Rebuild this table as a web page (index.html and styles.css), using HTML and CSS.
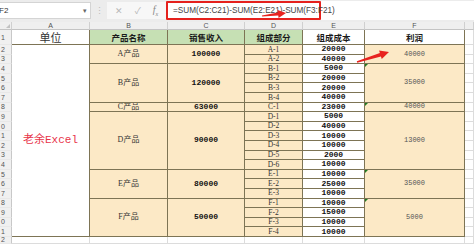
FILE: index.html
```html
<!DOCTYPE html>
<html lang="zh">
<head>
<meta charset="utf-8">
<title>Sheet</title>
<link rel="stylesheet" href="styles.css">
</head>
<body>
<div class="toolbar">
  <div class="namebox"><span class="cellref">F2</span><span class="caret">▾</span></div>
  <span class="grip">⋮</span>
  <div class="fxbtns"><span class="ic">✕</span><span class="ic">✓</span><span class="ic fx">f<sub>x</sub></span></div>
  <div class="formula"><span class="formula-text">=SUM(C2:C21)-SUM(E2:E21)-SUM(F3:F21)</span></div>
</div>
<div class="sheet">
  <div class="c ch corner"></div><div class="c ch">A</div><div class="c ch">B</div><div class="c ch">C</div><div class="c ch">D</div><div class="c ch">E</div><div class="c ch">F</div><div class="c ch"></div>

  <div class="c rh">1</div><div class="c t unit">单位</div><div class="c t hdr green">产品名称</div><div class="c t hdr green">销售收入</div><div class="c t hdr green">组成部分</div><div class="c t hdr">组成成本</div><div class="c t hdr">利润</div><div class="c g"></div>

  <div class="c rh">2</div><div class="c t s20 brand">老余Excel</div><div class="c t s2 prod o">A产品</div><div class="c t s2 num o">100000</div><div class="c t part o">A-1</div><div class="c t num">20000</div><div class="c t s2 profit o">40000</div><div class="c g"></div>
  <div class="c rh">3</div><div class="c t part o">A-2</div><div class="c t num">40000</div><div class="c g"></div>

  <div class="c rh">4</div><div class="c t s4 prod o">B产品</div><div class="c t s4 num o">120000</div><div class="c t part o">B-1</div><div class="c t num">5000</div><div class="c t s4 profit o flag">35000</div><div class="c g"></div>
  <div class="c rh">5</div><div class="c t part o">B-2</div><div class="c t num">20000</div><div class="c g"></div>
  <div class="c rh">6</div><div class="c t part o">B-3</div><div class="c t num">20000</div><div class="c g"></div>
  <div class="c rh">7</div><div class="c t part o">B-4</div><div class="c t num">40000</div><div class="c g"></div>

  <div class="c rh">8</div><div class="c t prod o">C产品</div><div class="c t num o">63000</div><div class="c t part o">C-1</div><div class="c t num">23000</div><div class="c t profit o flag">40000</div><div class="c g"></div>

  <div class="c rh">9</div><div class="c t s6 prod o">D产品</div><div class="c t s6 num o">90000</div><div class="c t part o">D-1</div><div class="c t num">5000</div><div class="c t s6 profit o">13000</div><div class="c g"></div>
  <div class="c rh">0</div><div class="c t part o">D-2</div><div class="c t num">40000</div><div class="c g"></div>
  <div class="c rh">1</div><div class="c t part o">D-3</div><div class="c t num">10000</div><div class="c g"></div>
  <div class="c rh">2</div><div class="c t part o">D-4</div><div class="c t num">10000</div><div class="c g"></div>
  <div class="c rh">3</div><div class="c t part o">D-5</div><div class="c t num">2000</div><div class="c g"></div>
  <div class="c rh">4</div><div class="c t part o">D-6</div><div class="c t num">10000</div><div class="c g"></div>

  <div class="c rh">5</div><div class="c t s3 prod o">E产品</div><div class="c t s3 num o">80000</div><div class="c t part o">E-1</div><div class="c t num">10000</div><div class="c t s3 profit o flag">35000</div><div class="c g"></div>
  <div class="c rh">6</div><div class="c t part o">E-2</div><div class="c t num">25000</div><div class="c g"></div>
  <div class="c rh">7</div><div class="c t part o">E-3</div><div class="c t num">10000</div><div class="c g"></div>

  <div class="c rh">8</div><div class="c t s4 prod o">F产品</div><div class="c t s4 num o">50000</div><div class="c t part o">F-1</div><div class="c t num">10000</div><div class="c t s4 profit o flag">5000</div><div class="c g"></div>
  <div class="c rh">9</div><div class="c t part o">F-2</div><div class="c t num">15000</div><div class="c g"></div>
  <div class="c rh">0</div><div class="c t part o">F-3</div><div class="c t num">10000</div><div class="c g"></div>
  <div class="c rh">1</div><div class="c t part o">F-4</div><div class="c t num">10000</div><div class="c g"></div>

  <div class="c rh">2</div><div class="c g"></div><div class="c g"></div><div class="c g"></div><div class="c g"></div><div class="c g"></div><div class="c g"></div><div class="c g"></div>
</div>
<svg class="arrows" width="474" height="244" viewBox="0 0 474 244">
  <polygon points="262.06,16.5 278.25,15.48 278.56,17.96 286,13 277.56,10.02 277.87,12.5 261.94,15.5"/>
  <polygon points="357.21,62.67 380.95,56.4 381.75,58.97 389,52 379.07,50.39 379.87,52.96 356.79,61.33"/>
</svg>
</body>
</html>
```
FILE: styles.css
```css
* { box-sizing: border-box; margin: 0; padding: 0; }
body {
  width: 474px; height: 244px; overflow: hidden; position: relative;
  background: #fff;
  font-family: "Liberation Sans", "Noto Sans CJK SC", sans-serif;
  color: #222;
}
.toolbar {
  display: flex; align-items: center;
  height: 22px; background: #ececec;
  padding: 1px 0 2px;
}
.namebox {
  width: 91px; height: 17px; flex: none;
  background: #fff; border: 1px solid #d4d4d4; border-left: none;
  display: flex; align-items: center; justify-content: space-between;
  padding: 0 3px 0 0; font-size: 8px; color: #333;
}
.cellref { margin-left: -1px; }
.caret { font-size: 7px; color: #666; }
.grip { width: 16px; flex: none; text-align: center; color: #bbb; font-size: 9px; }
.fxbtns {
  width: 59px; height: 17px; flex: none;
  display: flex; align-items: center; justify-content: space-around;
  background: #f7f7f7; color: #b8b8b8; font-size: 9px;
  padding: 0 2px;
}
.fx { font-family: "Liberation Serif", serif; font-style: italic; color: #888; font-size: 10px; }
.fx sub { font-size: 6px; }
.formula {
  flex: 1; height: 19px; background: #fff;
  display: flex; align-items: stretch;
}
.formula-text {
  width: 155px; border: 2px solid #e5211d; border-radius: 1px;
  display: flex; align-items: center; padding-left: 5px;
  font-size: 8.2px; letter-spacing: 0; color: #444; white-space: nowrap;
}
.sheet {
  display: grid;
  grid-template-columns: 12px 78px 78px 77px 58px 62px 100px 1fr;
  grid-template-rows: 8px 15px repeat(20, 9.6px) 1fr;
  height: 222px;
}
.c {
  border-right: 1px solid #dcdcdc; border-bottom: 1px solid #dcdcdc;
  display: flex; align-items: center; justify-content: center;
  overflow: hidden; white-space: nowrap; line-height: 1;
  position: relative;
}
.ch { background: #efefef; border-color: #d0d0d0; border-bottom-color: #c4c4c4; font-size: 7px; color: #555; }
.corner::after {
  content: ""; position: absolute; right: 1px; bottom: 1px;
  border-left: 4px solid transparent; border-bottom: 4px solid #c2c2c2;
}
.rh {
  background: #f0f0f0; border-right-color: #c8c8c8; border-bottom-color: #e8e8e8;
  justify-content: flex-start; padding-left: 1px;
  font-size: 7px; color: #555;
}
.t { border-right-color: #7d7455; border-bottom-color: #7d7455; }
.g { background: #fff; }
.green { background: #c6e0b4; }
.o { background: #fce9c6; }
.s2 { grid-row: span 2; }
.s3 { grid-row: span 3; }
.s4 { grid-row: span 4; }
.s6 { grid-row: span 6; }
.s20 { grid-row: span 20; }
.hdr { font-family: "Noto Sans CJK SC", sans-serif; font-weight: 700; font-size: 8.5px; color: #1a1a1a; }
.unit { font-family: "Noto Sans CJK SC", sans-serif; font-size: 11px; color: #333; }
.brand { font-family: "Liberation Mono", "Noto Sans CJK SC", monospace; font-size: 11px; color: #e8344a; }
.prod { font-family: "Liberation Serif", "Noto Sans CJK SC", serif; font-size: 8px; color: #333; }
.num { font-family: "Liberation Mono", monospace; font-weight: 700; font-size: 8px; color: #111; }
.part { font-family: "Liberation Serif", serif; font-size: 7.5px; color: #333; }
.profit { font-family: "Liberation Mono", monospace; font-size: 7px; color: #555; }
.flag::before {
  content: ""; position: absolute; left: 0; top: 0;
  border-top: 3px solid #207a20; border-right: 3px solid transparent;
}
.arrows { position: absolute; left: 0; top: 0; pointer-events: none; fill: #e8231f; }
```
